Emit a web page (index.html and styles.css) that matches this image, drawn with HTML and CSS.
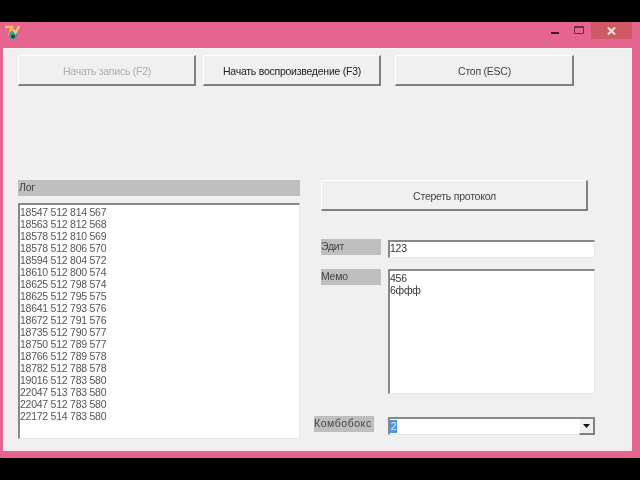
FILE: index.html
```html
<!DOCTYPE html>
<html lang="ru">
<head>
<meta charset="utf-8">
<title>Запись</title>
<link rel="stylesheet" href="styles.css">
</head>
<body>
<div class="window">
  <div class="titlebar">
    <svg class="app-icon" width="17" height="16" viewBox="0 0 17 16">
      <path d="M1 2h7L5 11" fill="none" stroke="#e3c64a" stroke-width="2.400"/>
      <circle cx="9" cy="10" r="4" fill="#3d9a94"/>
      <circle cx="9" cy="11.500" r="2" fill="#263f4d"/>
      <path d="M9 4l2.500 4L15 1" fill="none" stroke="#e8d66a" stroke-width="2"/>
    </svg>
    <div class="controls">
      <svg class="ctl-min" width="8" height="3" viewBox="0 0 8 3"><rect width="8" height="2" y="1" fill="#3c1a2a"/></svg>
      <svg class="ctl-max" width="10" height="8" viewBox="0 0 10 8"><path d="M.5.5h9v7h-9z M0 1.500h10" fill="none" stroke="#6a2a4c"/></svg>
      <div class="ctl-close">
        <svg width="9" height="8" viewBox="0 0 9 8"><path d="M1 .5l7 7M8 .5l-7 7" stroke="#f6e4e4" stroke-width="2"/></svg>
      </div>
    </div>
  </div>
  <div class="client">
    <div class="toolbar">
      <button class="btn btn-wide disabled" type="button">Начать запись (F2)</button>
      <button class="btn btn-wide strong" type="button">Начать воспроизведение (F3)</button>
      <button class="btn btn-stop" type="button">Стоп (ESC)</button>
    </div>
    <div class="panels">
      <section class="log">
        <div class="caption log-caption">Лог</div>
        <div class="field listbox">18547 512 814 567<br>18563 512 812 568<br>18578 512 810 569<br>18578 512 806 570<br>18594 512 804 572<br>18610 512 800 574<br>18625 512 798 574<br>18625 512 795 575<br>18641 512 793 576<br>18672 512 791 576<br>18735 512 790 577<br>18750 512 789 577<br>18766 512 789 578<br>18782 512 788 578<br>19016 512 783 580<br>22047 513 783 580<br>22047 512 783 580<br>22172 514 783 580</div>
      </section>
      <section class="form">
        <button class="btn btn-clear" type="button">Стереть протокол</button>
        <div class="row row-edit">
          <div class="caption side">Эдит</div>
          <div class="field edit">123</div>
        </div>
        <div class="row row-memo">
          <div class="caption side">Мемо</div>
          <div class="field memo">456<br>6ффф</div>
        </div>
        <div class="row row-combo">
          <div class="caption side combo-caption">Комбобокс</div>
          <div class="field combo">
            <span class="selected">2</span>
            <span class="drop"><svg width="7" height="4" viewBox="0 0 7 4"><path d="M0 0h7L3.500 4z" fill="#111"/></svg></span>
          </div>
        </div>
      </section>
    </div>
  </div>
</div>
</body>
</html>
```
FILE: styles.css
```css
* { box-sizing: border-box; }
html, body { margin: 0; height: 480px; overflow: hidden; background: #000; }
body {
  padding: 22px 0;
  font: 10.5px/12px "Liberation Sans", Arial, sans-serif;
  letter-spacing: -.25px;
  color: #444;
}
.window {
  height: 436px;
  background: #e56590;
  padding: 0 8px 7px 3px;
  display: flex;
  flex-direction: column;
  filter: blur(.3px);
}
.titlebar {
  height: 26px;
  flex: none;
  display: flex;
  justify-content: space-between;
  align-items: flex-start;
  padding-top: 3px;
}
.app-icon { margin-left: 1px; }
.controls { display: flex; align-items: flex-start; margin-top: -3px; }
.ctl-min { margin-top: 9px; }
.ctl-max { margin: 4px 0 0 15px; }
.ctl-close {
  width: 41px;
  height: 17px;
  margin-left: 7px;
  background: #cf5a66;
  display: flex;
  align-items: center;
  justify-content: center;
}
.client {
  flex: 1;
  background: #f0f0f0;
  border-top: 1px solid #f6f6f6;
  border-bottom: 2px solid #fbe6ec;
  padding: 6px 0 0 15px;
}
.toolbar { display: flex; gap: 7px; }
.btn {
  height: 31px;
  background: #f0f0f0;
  border: 1px solid #fff;
  border-right: 2px solid #808080;
  border-bottom: 2px solid #808080;
  font: inherit;
  letter-spacing: inherit;
  color: #444;
  padding: 2px 0 0 1px;
}
.btn-wide { width: 178px; }
.btn-stop { width: 179px; margin-left: 7px; }
.disabled { color: #adadad; }
.strong { color: #222; }
.panels { display: flex; margin-top: 94px; }
.log { width: 282px; }
.caption { background: #bfbfbf; color: #444; height: 16px; line-height: 15px; }
.log-caption { padding-left: 1px; }
.field {
  background: #fff;
  border: 2px solid #888;
  border-right: 1px solid #e8e8e8;
  border-bottom: 1px solid #e8e8e8;
  padding: 1px 0 0 0;
  color: #555;
}
.listbox { height: 236px; margin-top: 7px; }
.form { width: 281px; margin-left: 14px; padding-left: 7px; display: flex; flex-direction: column; }
.btn-clear { width: 267px; }
.row { display: flex; gap: 7px; }
.side { width: 60px; flex: none; }
.combo-caption { letter-spacing: .55px; line-height: 14px; }
.row-edit { margin-top: 28px; }
.row-memo { margin-top: 11px; }
.row-combo { margin: 22px 0 0 -7px; gap: 14px; }
.edit { width: 207px; height: 18px; margin-top: 1px; padding-top: 0; color: #333; }
.memo { width: 207px; height: 125px; color: #333; }
.combo {
  width: 207px;
  height: 18px;
  margin-top: 1px;
  display: flex;
  justify-content: space-between;
  padding: 0;
  border-right: none;
}
.selected { background: #4f97e2; color: #dfeeff; width: 7px; height: 13px; margin: 1px 0 0 0; text-align: center; }
.drop {
  width: 16px;
  height: 16px;
  background: #f0f0f0;
  border-right: 2px solid #808080;
  border-bottom: 2px solid #808080;
  border-left: 1px solid #fff;
  display: flex;
  align-items: center;
  justify-content: center;
}
```
